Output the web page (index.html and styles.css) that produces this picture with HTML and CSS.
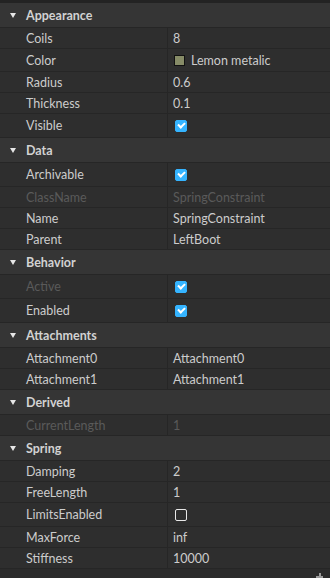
FILE: index.html
```html
<!DOCTYPE html>
<html lang="en">
<head>
    <meta charset="UTF-8">
    <meta name="viewport" content="width=device-width, initial-scale=1.0">
    <title>Properties</title>
    <link rel="stylesheet" href="styles.css">
</head>
<body>
    <div class="panel">
        <div class="header"><span class="arrow"></span>Appearance</div>
        <div class="row"><div class="name">Coils</div><div class="value">8</div></div>
        <div class="row tall-color"><div class="name">Color</div><div class="value"><span class="swatch"></span>Lemon metalic</div></div>
        <div class="row"><div class="name">Radius</div><div class="value">0.6</div></div>
        <div class="row"><div class="name">Thickness</div><div class="value">0.1</div></div>
        <div class="row tall"><div class="name">Visible</div><div class="value"><span class="check on"></span></div></div>

        <div class="header"><span class="arrow"></span>Data</div>
        <div class="row tall"><div class="name">Archivable</div><div class="value"><span class="check on"></span></div></div>
        <div class="row disabled"><div class="name">ClassName</div><div class="value">SpringConstraint</div></div>
        <div class="row"><div class="name">Name</div><div class="value">SpringConstraint</div></div>
        <div class="row"><div class="name">Parent</div><div class="value">LeftBoot</div></div>

        <div class="header"><span class="arrow"></span>Behavior</div>
        <div class="row tall disabled"><div class="name">Active</div><div class="value"><span class="check on"></span></div></div>
        <div class="row tall"><div class="name">Enabled</div><div class="value"><span class="check on"></span></div></div>

        <div class="header"><span class="arrow"></span>Attachments</div>
        <div class="row"><div class="name">Attachment0</div><div class="value">Attachment0</div></div>
        <div class="row"><div class="name">Attachment1</div><div class="value">Attachment1</div></div>

        <div class="header"><span class="arrow"></span>Derived</div>
        <div class="row disabled"><div class="name">CurrentLength</div><div class="value">1</div></div>

        <div class="header"><span class="arrow"></span>Spring</div>
        <div class="row"><div class="name">Damping</div><div class="value">2</div></div>
        <div class="row"><div class="name">FreeLength</div><div class="value">1</div></div>
        <div class="row tall"><div class="name">LimitsEnabled</div><div class="value"><span class="check"></span></div></div>
        <div class="row"><div class="name">MaxForce</div><div class="value">inf</div></div>
        <div class="row"><div class="name">Stiffness</div><div class="value">10000</div></div>

        <div class="footer"><span class="grip"></span></div>
    </div>
</body>
</html>
```

FILE: styles.css
```css
body {
    margin: 0;
    background-color: #2e2e2e;
    font-family: Lato, "Open Sans", sans-serif;
    font-size: 12.5px;
    color: #cccccc;
}
.panel {
    width: 330px;
    height: 578px;
    overflow: hidden;
    border-top: 3px solid #232323;
    box-sizing: border-box;
}
.header {
    height: 24px;
    border-bottom: 1px solid #262626;
    background-color: #353535;
    display: flex;
    align-items: center;
    font-weight: bold;
    color: #d2d2d2;
}
.arrow {
    width: 0;
    height: 0;
    margin: 1px 10px 0 10px;
    border-left: 3px solid transparent;
    border-right: 3px solid transparent;
    border-top: 5px solid #e6e6e6;
}
.row {
    height: 20px;
    border-bottom: 1px solid #262626;
    display: grid;
    grid-template-columns: 167px 1fr;
}
.row.tall {
    height: 23px;
}
.row.tall-color {
    height: 22px;
}
.name {
    padding-left: 26px;
    display: flex;
    align-items: center;
}
.value {
    border-left: 1px solid #262626;
    padding-left: 5px;
    display: flex;
    align-items: center;
}
.disabled {
    color: #5a5a5a;
}
.swatch {
    width: 9px;
    height: 9px;
    margin: 0 6px 0 1px;
    border: 1px solid #111111;
    background-color: #868b67;
}
.check {
    width: 10px;
    height: 10px;
    margin-left: 2px;
    border: 1px solid #e8e8e8;
    border-radius: 2px;
    position: relative;
}
.check.on {
    background-color: #35b4ff;
    border-color: #35b4ff;
}
.check.on::after {
    content: "";
    position: absolute;
    left: 2px;
    top: 1px;
    width: 5px;
    height: 3px;
    border-left: 2px solid #ffffff;
    border-bottom: 2px solid #ffffff;
    transform: rotate(-45deg);
}
.footer {
    height: 9px;
    display: flex;
    justify-content: flex-end;
    background-color: #2b2b2b;
}
.grip {
    width: 7px;
    height: 7px;
    margin: 4px 7px 0 0;
    position: relative;
}
.grip::before,
.grip::after {
    content: "";
    position: absolute;
    background-color: #9a9a9a;
}
.grip::before {
    left: 0;
    top: 3px;
    width: 7px;
    height: 2px;
}
.grip::after {
    left: 3px;
    top: 0;
    width: 2px;
    height: 7px;
}
```
